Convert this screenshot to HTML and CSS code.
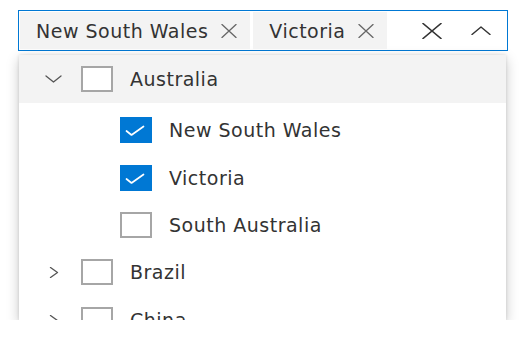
FILE: index.html
```html
<!DOCTYPE html>
<html lang="en">
<head>
    <meta charset="UTF-8">
    <title>Tree Select</title>
    <link rel="stylesheet" href="styles.css">
</head>
<body>
    <div class="combo">
        <div class="chips">
            <span class="chip">New South Wales
                <svg class="chip-x" width="16" height="14" viewBox="0 0 16 14"><path d="M1 0.5 L15 13.5 M15 0.5 L1 13.5"/></svg>
            </span>
            <span class="chip">Victoria
                <svg class="chip-x" width="16" height="14" viewBox="0 0 16 14"><path d="M1 0.5 L15 13.5 M15 0.5 L1 13.5"/></svg>
            </span>
        </div>
        <div class="actions">
            <svg class="clear" width="20" height="16" viewBox="0 0 20 16"><path d="M1 0.5 L19 15.5 M19 0.5 L1 15.5"/></svg>
            <svg class="toggle" width="20" height="9" viewBox="0 0 20 9"><path d="M1 8.5 L10 1 L19 8.5"/></svg>
        </div>
    </div>

    <!-- Dropdown tree -->
    <div class="panel">
        <div class="row active">
            <span class="expander"><svg width="17" height="8" viewBox="0 0 17 8"><path d="M1 1 L8.5 7 L16 1"/></svg></span>
            <span class="box"></span>
            <span class="label">Australia</span>
        </div>
        <div class="row child first">
            <span class="box checked"><svg width="32" height="26" viewBox="0 0 32 26"><path d="M6.5 14 L11.5 18 L23.5 9.5"/></svg></span>
            <span class="label">New South Wales</span>
        </div>
        <div class="row child">
            <span class="box checked"><svg width="32" height="26" viewBox="0 0 32 26"><path d="M6.5 14 L11.5 18 L23.5 9.5"/></svg></span>
            <span class="label">Victoria</span>
        </div>
        <div class="row child last">
            <span class="box"></span>
            <span class="label">South Australia</span>
        </div>
        <div class="row">
            <span class="expander"><svg width="10" height="11" viewBox="0 0 10 11"><path d="M1.5 0.5 L8.5 5.5 L1.5 10.5"/></svg></span>
            <span class="box"></span>
            <span class="label">Brazil</span>
        </div>
        <div class="row">
            <span class="expander"><svg width="10" height="11" viewBox="0 0 10 11"><path d="M1.5 0.5 L8.5 5.5 L1.5 10.5"/></svg></span>
            <span class="box"></span>
            <span class="label">China</span>
        </div>
    </div>
</body>
</html>
```

FILE: styles.css
```css
body {
    margin: 0;
    padding: 10px 0 0 18px;
    font-family: "DejaVu Sans", "Open Sans", sans-serif;
    font-size: 19px;
    letter-spacing: 0.5px;
    color: #333;
    background: #fff;
}
svg path {
    fill: none;
    stroke-linecap: round;
    stroke-linejoin: round;
}
.combo {
    box-sizing: border-box;
    width: 490px;
    height: 41px;
    border: 1px solid #0078d4;
    padding: 1px 1px;
    display: flex;
    align-items: center;
    justify-content: space-between;
}
.chips {
    display: flex;
    gap: 3px;
    height: 37px;
}
.chip {
    display: flex;
    align-items: center;
    gap: 13px;
    padding: 0 13px 0 16px;
    background: #f3f3f3;
}
.chip-x path {
    stroke: #666;
    stroke-width: 1.3;
}
.actions {
    display: flex;
    align-items: center;
    gap: 29px;
    padding-right: 15px;
}
.clear path {
    stroke: #333;
    stroke-width: 1.6;
}
.toggle path {
    stroke: #333;
    stroke-width: 1.4;
}
.panel {
    margin-top: 4px;
    margin-left: 1px;
    width: 487px;
    height: 265px;
    overflow: hidden;
    background: #fff;
    box-shadow: 0 4px 12px rgba(0, 0, 0, 0.22), 0 0 3px rgba(0, 0, 0, 0.12);
}
.row {
    box-sizing: border-box;
    display: flex;
    align-items: center;
    height: 48px;
    padding-left: 26px;
}
.row.active {
    background: #f3f3f3;
}
.row.child {
    padding-left: 101px;
}
.row.first {
    height: 51px;
    padding-top: 3px;
}
.row.last {
    height: 46px;
}
.expander {
    width: 17px;
    margin-right: 19px;
    display: flex;
    justify-content: center;
}
.expander path {
    stroke: #555;
    stroke-width: 1.3;
}
.box {
    box-sizing: border-box;
    width: 32px;
    height: 26px;
    border: 2px solid #a6a6a6;
    background: #fff;
    flex-shrink: 0;
    position: relative;
}
.box.checked {
    background: #0078d4;
    border-color: #0078d4;
}
.box.checked svg {
    position: absolute;
    left: -2px;
    top: -2px;
}
.box.checked path {
    stroke: #fff;
    stroke-width: 1.7;
}
.label {
    margin-left: 17px;
}
```
